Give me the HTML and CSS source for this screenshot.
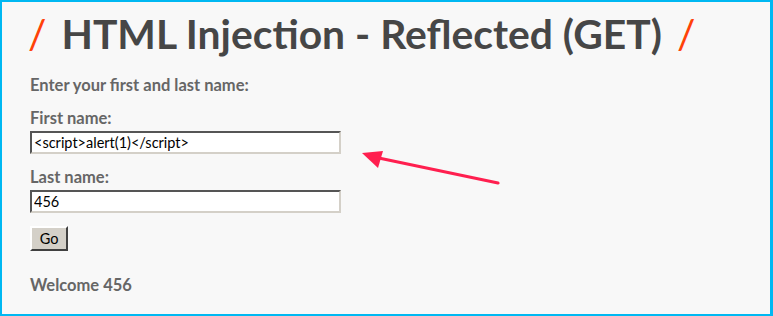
FILE: index.html
```html
<!DOCTYPE html>
<html>
<head>
<meta charset="utf-8">
<link rel="stylesheet" href="styles.css">
</head>
<body>
<div class="frame">
  <h1 class="title"><span class="slash">/</span><span class="title-text">HTML Injection - Reflected (GET)</span><span class="slash">/</span></h1>
  <p class="intro">Enter your first and last name:</p>
  <form class="form">
    <label class="label" for="firstname">First name:</label>
    <input class="field" type="text" id="firstname" value="&lt;script&gt;alert(1)&lt;/script&gt;">
    <label class="label label-last" for="lastname">Last name:</label>
    <input class="field" type="text" id="lastname" value="456">
    <button class="go" type="button">Go</button>
  </form>
  <p class="welcome">Welcome 456</p>
  <svg class="arrow" width="150" height="40" viewBox="0 0 150 40">
    <line x1="138" y1="32" x2="14" y2="6" stroke="#ff1f4f" stroke-width="3" stroke-linecap="round"/>
    <polygon points="2,2 23,0 18,17" fill="#ff1f4f"/>
  </svg>
</div>
</body>
</html>
```
FILE: styles.css
```css
html, body {
  margin: 0;
  padding: 0;
}
body {
  width: 773px;
  height: 316px;
  overflow: hidden;
  background: #f7f7f7;
  font-family: "Lato", "Open Sans", sans-serif;
}
.frame {
  position: relative;
  box-sizing: border-box;
  width: 773px;
  height: 316px;
  border: 2px solid #00b8f2;
  border-right-width: 3px;
  background: #f8f8f8;
  padding: 0 0 0 26px;
}
.title {
  margin: 8px 0 0 0;
  display: flex;
  align-items: center;
  gap: 15px;
  font-family: "Lato", sans-serif;
  font-weight: 700;
  font-size: 40.8px;
  line-height: 48px;
  color: #464646;
}
.slash {
  color: #ff4208;
  font-weight: 400;
}
.intro {
  margin: 17px 0 0 2px;
  font-size: 16.5px;
  font-weight: 700;
  color: #666;
  line-height: 20px;
}
.form {
  display: flex;
  flex-direction: column;
  align-items: flex-start;
  margin: 13px 0 0 2px;
}
.label {
  font-size: 16.5px;
  font-weight: 700;
  color: #666;
  line-height: 20px;
  margin-bottom: 3px;
}
.label-last {
  margin-top: 13px;
}
.field {
  box-sizing: border-box;
  width: 311px;
  height: 23px;
  margin: 0;
  padding: 0 2px;
  border: 2px solid;
  border-color: #555 #d4d0c8 #d4d0c8 #555;
  background: #fff;
  font-family: "Lato", sans-serif;
  font-size: 14.5px;
  color: #000;
}
.go {
  box-sizing: border-box;
  margin-top: 13px;
  width: 38px;
  height: 25px;
  padding: 0;
  border: 2px solid;
  border-color: #fff #404040 #404040 #fff;
  background: #d4d0c8;
  font-family: "Lato", sans-serif;
  font-size: 14.5px;
  color: #000;
}
.welcome {
  margin: 24px 0 0 2px;
  font-size: 16.5px;
  font-weight: 700;
  color: #666;
  line-height: 20px;
}
.arrow {
  position: absolute;
  left: 358px;
  top: 149px;
}
```
